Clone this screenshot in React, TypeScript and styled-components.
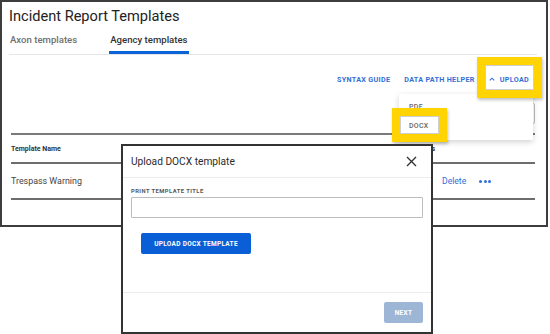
import styled, { createGlobalStyle } from "styled-components"

const GlobalStyle = createGlobalStyle`
  html, body {
    margin: 0;
    padding: 0;
    background: #ffffff;
  }
  body {
    font-family: Roboto, "Liberation Sans", Arial, sans-serif;
    color: #222;
  }
  * {
    box-sizing: border-box;
  }
`

const Stage = styled.div`
  position: relative;
  width: 550px;
  height: 334px;
  overflow: hidden;
  background: #fff;
`

const Window = styled.div`
  width: 548px;
  height: 227px;
  border: 2px solid #3d3d3d;
  padding: 0 9px 0 7px;
  display: flex;
  flex-direction: column;
  background: #fff;
`

const Title = styled.h1`
  margin: 0;
  padding-top: 5px;
  height: 28px;
  font-size: 14.6px;
  font-weight: 400;
  color: #222;
  line-height: 18px;
`

const TabBar = styled.div`
  display: flex;
  gap: 31px;
  border-bottom: 1px solid #e6e6e6;
  height: 25px;
`

const Tab = styled.div<{ $active?: boolean }>`
  font-size: 9.6px;
  font-weight: 500;
  line-height: 19px;
  padding: 0 1px;
  color: ${(p) => (p.$active ? "#333" : "#707070")};
  border-bottom: 3px solid ${(p) => (p.$active ? "#0b63d8" : "transparent")};
`

const Toolbar = styled.div`
  display: flex;
  justify-content: flex-end;
  align-items: center;
  gap: 14px;
  height: 48px;
  padding-right: 8px;
`

const LinkButton = styled.span`
  display: flex;
  align-items: center;
  gap: 5px;
  font-size: 7.2px;
  font-weight: 700;
  letter-spacing: 0.3px;
  color: #2f6fd6;
  white-space: nowrap;
`

const SearchRow = styled.div`
  display: flex;
  justify-content: flex-end;
  height: 30px;
`

const SearchBox = styled.div`
  width: 134px;
  height: 21px;
  border: 1px solid #bdbdbd;
  border-radius: 2px;
  margin-right: 2px;
`

const Table = styled.div`
  margin: 0 2px 0 2px;
  border-top: 2px solid #7a7a7a;
`

const Row = styled.div<{ $head?: boolean }>`
  display: flex;
  align-items: center;
  height: ${(p) => (p.$head ? "29px" : "36px")};
  border-bottom: 2px solid #6d6d6d;
  font-size: ${(p) => (p.$head ? "7px" : "8.9px")};
  font-weight: ${(p) => (p.$head ? 700 : 400)};
  color: ${(p) => (p.$head ? "#333" : "#444")};
`

const NameCell = styled.div`
  flex: 1;
`

const ActionsCell = styled.div`
  width: 124px;
  display: flex;
  align-items: center;
  gap: 13px;
`

const DeleteLink = styled.span`
  color: #2f6fd6;
  font-size: 8.6px;
  margin-left: 31px;
`

const Dots = styled.span`
  display: flex;
  gap: 1.5px;
  & > i {
    width: 3px;
    height: 3px;
    border-radius: 50%;
    background: #2f6fd6;
  }
`

const Menu = styled.div`
  position: absolute;
  left: 399px;
  top: 94px;
  width: 134px;
  height: 46px;
  background: #fff;
  box-shadow: 0 2px 6px rgba(0, 0, 0, 0.18);
  display: flex;
  flex-direction: column;
  padding-top: 8px;
`

const MenuItem = styled.div`
  font-size: 7px;
  font-weight: 500;
  letter-spacing: 0.3px;
  color: #666;
  padding: 0 10px;
  height: 19px;
  line-height: 10px;
`

const Highlight = styled.div`
  position: absolute;
  border: 8px solid #ffd400;
  box-shadow: 1px 2px 3px rgba(0, 0, 0, 0.25), inset 0 0 0 1px #cfcfcf;
`

const Modal = styled.div`
  position: absolute;
  left: 121px;
  top: 144px;
  width: 312px;
  height: 190px;
  border: 2px solid #333;
  background: #fff;
  display: flex;
  flex-direction: column;
`

const ModalHeader = styled.div`
  height: 32px;
  display: flex;
  align-items: center;
  justify-content: space-between;
  padding: 0 14px 0 8px;
  border-bottom: 1px solid #ececec;
  font-size: 10.2px;
  color: #2a2a2a;
`

const ModalBody = styled.div`
  flex: 1;
  padding: 10px 8px 0 8px;
  display: flex;
  flex-direction: column;
`

const Label = styled.div`
  font-size: 5.8px;
  font-weight: 700;
  letter-spacing: 0.45px;
  color: #555;
  height: 9px;
`

const TitleInput = styled.div`
  height: 21px;
  border: 1px solid #bcbcbc;
  border-radius: 1px;
`

const PrimaryButton = styled.button`
  align-self: flex-start;
  margin: 15px 0 0 10px;
  height: 21px;
  width: 110px;
  border: none;
  border-radius: 2px;
  background: #0b5fd6;
  color: #fff;
  font-family: inherit;
  font-size: 6.5px;
  font-weight: 700;
  letter-spacing: 0.3px;
  padding: 0;
`

const ModalFooter = styled.div`
  height: 40px;
  border-top: 1px solid #ececec;
  display: flex;
  justify-content: flex-end;
  align-items: flex-start;
  padding: 9px 8px 0 0;
`

const NextButton = styled.button`
  width: 39px;
  height: 21px;
  border: none;
  border-radius: 2px;
  background: #9db6d6;
  color: #fff;
  font-family: inherit;
  font-size: 6.5px;
  font-weight: 700;
  letter-spacing: 0.3px;
  padding: 0;
`

export default function App() {
  return (
    <>
      <GlobalStyle />
      <Stage>
        <Window>
          <Title>Incident Report Templates</Title>
          <TabBar>
            <Tab>Axon templates</Tab>
            <Tab $active>Agency templates</Tab>
          </TabBar>
          <Toolbar>
            <LinkButton>SYNTAX GUIDE</LinkButton>
            <LinkButton>DATA PATH HELPER</LinkButton>
            <LinkButton>
              <svg width="6" height="4" viewBox="0 0 6 4">
                <path d="M0.8 3.4 L3 1.2 L5.2 3.4" fill="none" stroke="#2f6fd6" strokeWidth="1.1" />
              </svg>
              UPLOAD
            </LinkButton>
          </Toolbar>
          <SearchRow>
            <SearchBox />
          </SearchRow>
          <Table>
            <Row $head>
              <NameCell>Template Name</NameCell>
              <ActionsCell>Actions</ActionsCell>
            </Row>
            <Row>
              <NameCell>Trespass Warning</NameCell>
              <ActionsCell>
                <DeleteLink>Delete</DeleteLink>
                <Dots>
                  <i />
                  <i />
                  <i />
                </Dots>
              </ActionsCell>
            </Row>
          </Table>
        </Window>

        <Menu>
          <MenuItem>PDF</MenuItem>
          <MenuItem>DOCX</MenuItem>
        </Menu>

        <Highlight style={{ left: 477, top: 57, width: 65, height: 41 }} />
        <Highlight style={{ left: 392, top: 108, width: 55, height: 34 }} />

        <Modal>
          <ModalHeader>
            Upload DOCX template
            <svg width="11" height="11" viewBox="0 0 11 11">
              <path d="M1 1 L10 10 M10 1 L1 10" stroke="#333" strokeWidth="1.4" />
            </svg>
          </ModalHeader>
          <ModalBody>
            <Label>PRINT TEMPLATE TITLE</Label>
            <TitleInput />
            <PrimaryButton>UPLOAD DOCX TEMPLATE</PrimaryButton>
          </ModalBody>
          <ModalFooter>
            <NextButton>NEXT</NextButton>
          </ModalFooter>
        </Modal>
      </Stage>
    </>
  )
}
